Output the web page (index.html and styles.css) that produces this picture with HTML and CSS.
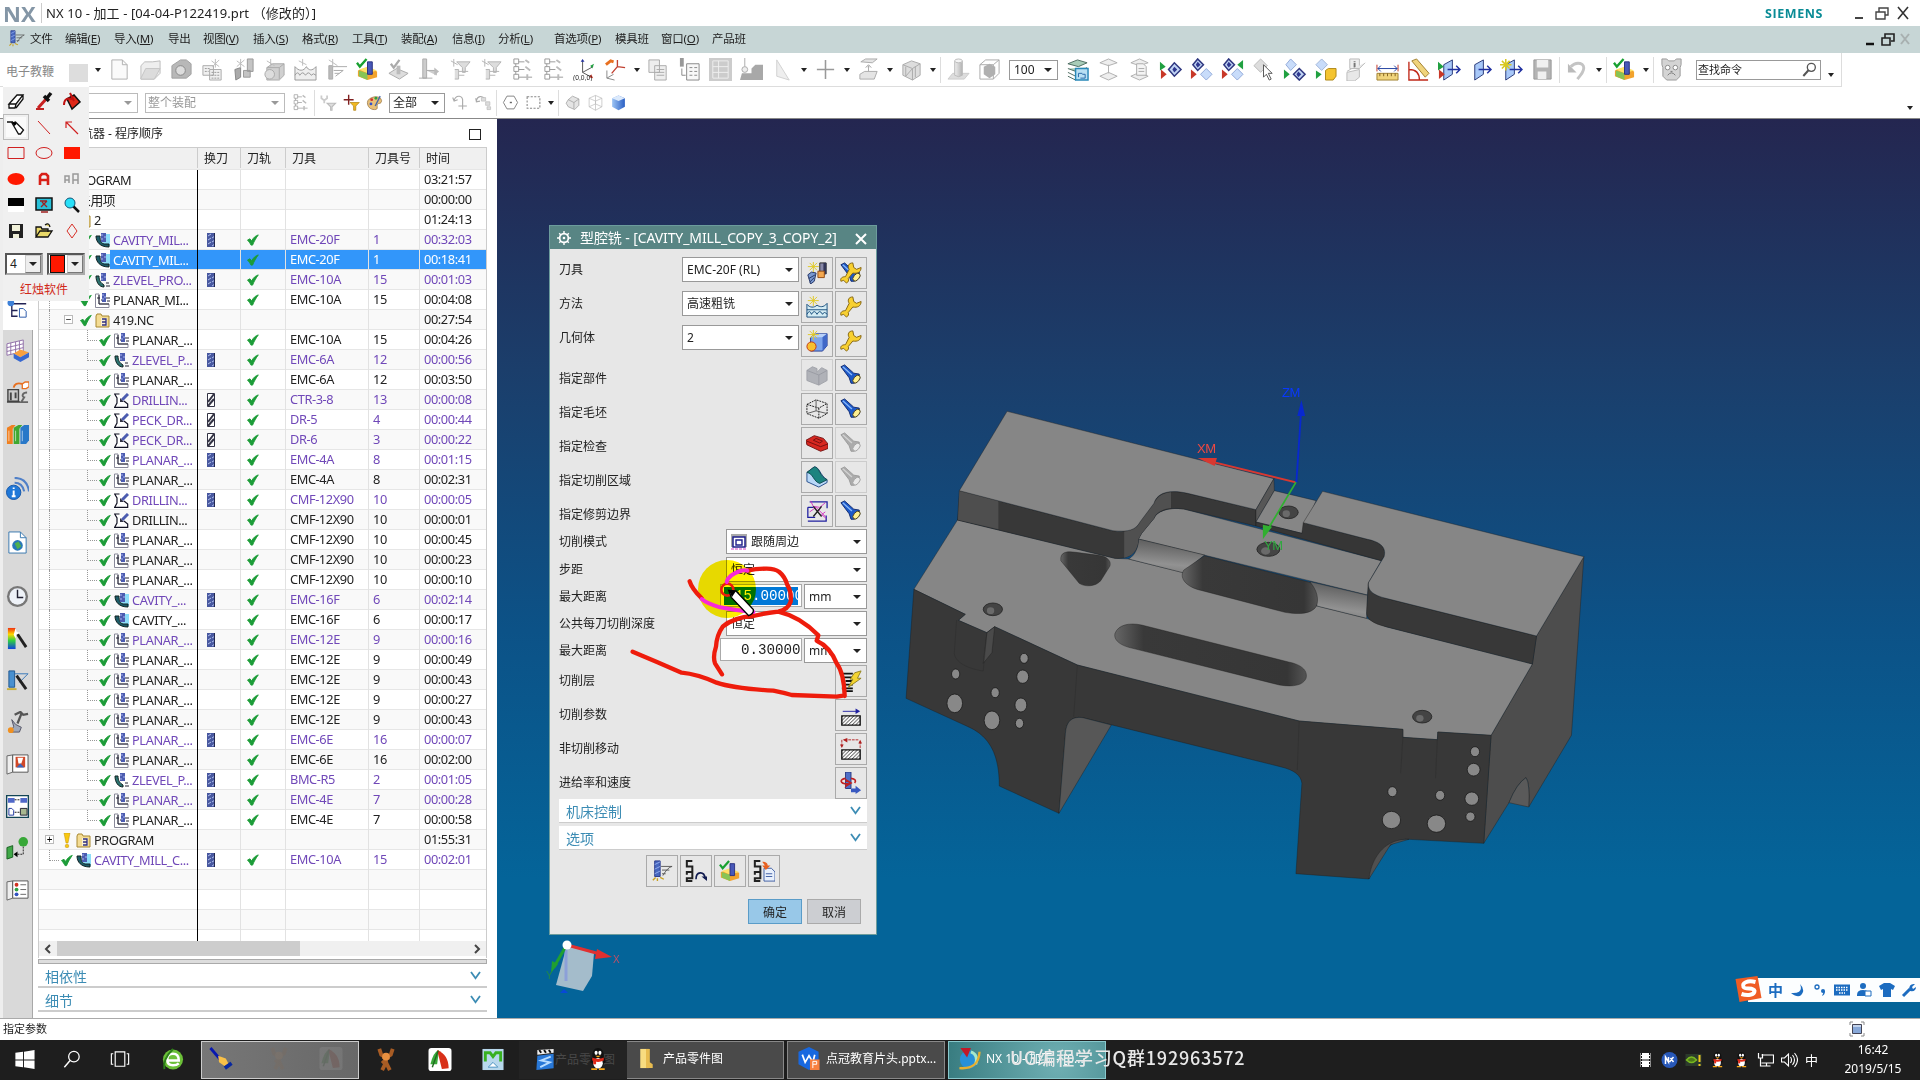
FILE: index.html
```html
<!DOCTYPE html>
<html lang="zh-CN">
<head>
  <meta charset="UTF-8" />
  <title>NX 10 - 加工</title>
  <link rel="stylesheet" href="styles.css">
</head>
<body>

<!-- Icons -->
<svg class="defs" width="0" height="0">
  <defs>
    <linearGradient id="gGray" x1="0" x2="1"><stop offset="0" stop-color="#eee"/><stop offset="1" stop-color="#b4b4b4"/></linearGradient>
    <linearGradient id="gBlue" x1="0" x2="1"><stop offset="0" stop-color="#9cc4f4"/><stop offset="1" stop-color="#2a5fc4"/></linearGradient>
    <linearGradient id="gGroove" x1="0.4" y1="0" x2="0.2" y2="1"><stop offset="0" stop-color="#5a5a5a"/><stop offset="0.7" stop-color="#929292"/><stop offset="1" stop-color="#7c7c7c"/></linearGradient>
    <linearGradient id="gSlot" x1="0" x2="1"><stop offset="0" stop-color="#666"/><stop offset="0.15" stop-color="#393939"/><stop offset="0.9" stop-color="#363636"/><stop offset="1" stop-color="#555"/></linearGradient>
    <linearGradient id="gRain" x1="0" y1="0" x2="0" y2="1"><stop offset="0" stop-color="#f03010"/><stop offset=".3" stop-color="#ffd800"/><stop offset=".6" stop-color="#30d040"/><stop offset="1" stop-color="#1040e0"/></linearGradient>
    <pattern id="hatch" width="4" height="4" patternUnits="userSpaceOnUse"><path d="M0 4L4 0" stroke="#222"/></pattern>
  </defs>

  <symbol id="doc" viewBox="0 0 24 24"><path d="M4 2h11l5 5v15H4z" fill="#fafafa" stroke="#b0b0b0"/><path d="M15 2v5h5" fill="none" stroke="#b0b0b0"/></symbol>
  <symbol id="open" viewBox="0 0 24 24"><path d="M2 8l4-4h8l8-1v13l-6 6H2z" fill="#eee" stroke="#bbb"/><path d="M2 21l5-10h15l-6 11H2z" fill="#dcdcdc" stroke="#c4c4c4"/></symbol>
  <symbol id="camera" viewBox="0 0 24 24"><path d="M2 8l6-4 3-2h6l5 4v11l-5 4H2z" fill="#b8b8b8" stroke="#a0a0a0"/><circle cx="11" cy="13" r="5" fill="#ddd" stroke="#888"/></symbol>
  <symbol id="newprog" viewBox="0 0 24 24"><path d="M2 8h11v10H2zM9 12h12v11H9z" fill="#f0f0f0" stroke="#aaa"/><path d="M11 15h8M11 18h8M11 21h8M4 11h6M4 14h4" stroke="#999" stroke-dasharray="2 1"/><path d="M15 1v9M11 3l8 6M19 2l-7 7" stroke="#bbb"/></symbol>
  <symbol id="newtool" viewBox="0 0 24 24"><path d="M3 12l6-2v10l-5 3z" fill="#aaa" stroke="#888"/><path d="M16 1h6v13h-6zM12 13h7v7h-7z" fill="#c4c4c4" stroke="#999"/><path d="M9 1v9M5 3l8 6M13 2L5 9" stroke="#bbb"/></symbol>
  <symbol id="newgeom" viewBox="0 0 24 24"><path d="M4 10l6-4h12v12l-5 5H4z" fill="#d0d0d0" stroke="#aaa"/><path d="M17 10v12M4 10h13l5-4" stroke="#aaa" fill="none"/><circle cx="7" cy="17" r="5" fill="#ddd" stroke="#aaa"/><path d="M8 1v8M4 3l8 5" stroke="#bbb"/></symbol>
  <symbol id="newmeth" viewBox="0 0 24 24"><path d="M1 9v14h22V9c-4 5-8 4-10 0-3 5-8 5-12 0z" fill="#eee" stroke="#999"/><path d="M1 18q3-5 5 0 3-5 6 0 3-5 6 0 2-3 5 0" fill="none" stroke="#999"/><path d="M9 1v7M5 3l8 4" stroke="#bbb"/></symbol>
  <symbol id="newop" viewBox="0 0 24 24"><path d="M4 8h4v14H4z" fill="#bbb" stroke="#aaa"/><path d="M8 9h15M9 13h10l-8 6M10 16h5" stroke="#aaa" fill="none"/><path d="M8 1v8M4 2l9 6" stroke="#bbb"/></symbol>
  <symbol id="verify" viewBox="0 0 24 24"><path d="M2 13l9-3 11 4v6l-10 3-10-4z" fill="#f2a32c"/><path d="M3 12l9-3 10 4-10 3z" fill="#ffe168"/><path d="M3 19l9 4V16l-9-3z" fill="#88c455"/><path d="M12 4h5v13h-5z" fill="#4858b8" stroke="#283080"/><path d="M1 5l3 4 7-8" stroke="#18a030" stroke-width="2.4" fill="none"/></symbol>
  <symbol id="vgray" viewBox="0 0 24 24"><path d="M4 6l3 4 6-8" stroke="#aaa" stroke-width="2.4" fill="none"/><path d="M2 16l8-5 12 5-9 6z" fill="#ddd" stroke="#aaa"/><path d="M10 8h4v9h-4z" fill="#bbb"/></symbol>
  <symbol id="toolpath" viewBox="0 0 24 24"><path d="M5 1h4v20H5zM1 21h14M9 13h10v5" fill="#ccc" stroke="#aaa"/><path d="M17 10l5 4-5 4" fill="#bbb"/></symbol>
  <symbol id="filt" viewBox="0 0 24 24"><path d="M8 4h14l-5 6v5h-3v-5zM6 12h4v10H6M10 14h10M10 18h6M5 1v8M2 3l7 4" fill="#ddd" stroke="#b4b4b4"/></symbol>
  <symbol id="tree" viewBox="0 0 24 24"><path d="M3 1h5v5H3zM3 9h5v5H3zM3 17h5v5H3zM8 4h6M8 12h6M8 20h14M5 6v3M5 14v3" fill="none" stroke="#999"/><path d="M15 2l4 3M15 9l5 4M17 17v6" stroke="#bbb" stroke-width="2"/></symbol>
  <symbol id="csys" viewBox="0 0 24 24"><path d="M10 15V2M10 15l11-6M10 15l9 5" stroke="#555" fill="none"/><path d="M8 4l2-3 2 3z" fill="#2030a0"/><path d="M18 8l4-2-2 5z" fill="#20a040"/><path d="M17 20l4 1-2-4z" fill="#d03020"/><text x="0" y="23" font-size="7" font-family="Liberation Sans" fill="#222">(0,0,0)</text></symbol>
  <symbol id="csys2" viewBox="0 0 24 24"><path d="M14 9V2M14 9l8 1M14 9l-6 7" stroke="#c04030" fill="none" stroke-width="1.4"/><path d="M2 7l5-4 3 1" stroke="#e87020" stroke-width="3" fill="none"/><path d="M3 21V13M3 21l7-4M3 21l8 2" stroke="#888" fill="none"/></symbol>
  <symbol id="list" viewBox="0 0 24 24"><path d="M9 6h13v17H9z" fill="#f8f8f8" stroke="#888"/><path d="M2 0h4v9H2z" fill="#999"/><path d="M12 10h3M12 14h3M12 18h3M17 10h3M17 14h3M17 18h3M4 11v7h4" fill="none" stroke="#888"/></symbol>
  <symbol id="copy" viewBox="0 0 24 24"><path d="M2 2h11v13H2zM8 8h12v15H8z" fill="#eee" stroke="#aaa"/><path d="M10 12h8M10 15h8M10 18h8" stroke="#aaa"/></symbol>
  <symbol id="grid" viewBox="0 0 24 24"><path d="M0 0h24v24H0z" fill="#ccc"/><path d="M4 3h16v18H4zM4 9h16M10 3v18M4 15h16" fill="none" stroke="#eee"/></symbol>
  <symbol id="stair" viewBox="0 0 24 24"><path d="M0 23h24V7h-8l-4 4v5H2z" fill="#a8a8a8"/><path d="M5 0v9" stroke="#aaa"/><circle cx="5" cy="12" r="3" fill="#eee" stroke="#aaa"/></symbol>
  <symbol id="tri" viewBox="0 0 24 24"><path d="M6 2v17l13 4z" fill="#eee" stroke="#d0d0d0"/></symbol>
  <symbol id="plus" viewBox="0 0 24 24"><path d="M12 2v20M3 12h18" stroke="#999" stroke-width="1.6"/></symbol>
  <symbol id="extr" viewBox="0 0 24 24"><path d="M3 17l5-3h13l-3 8H3zM4 4l5-3h12l-5 4zM12 14V8M9 10l3-3 3 3" fill="#e4e4e4" stroke="#aaa"/></symbol>
  <symbol id="cubeg" viewBox="0 0 24 24"><path d="M3 7l9-4 9 3v12l-8 5-10-5z" fill="#ddd" stroke="#aaa"/><path d="M3 7l10 4 8-5M13 11v12M6 9v10l7-8M16 9v11" fill="none" stroke="#aaa"/></symbol>
  <symbol id="cubew" viewBox="0 0 24 24"><path d="M2 7l6-5h14v14l-6 6H2zM2 7h14v15M16 7l6-5" fill="none" stroke="#aaa"/><path d="M6 9l6-3 6 3v8l-6 4-6-4z" fill="#b0b0b0"/></symbol>
  <symbol id="cyl" viewBox="0 0 24 24"><path d="M1 22l5-6h17l-5 6z" fill="#ddd" stroke="#ccc"/><path d="M8 3v15q4 3 8 0V3" fill="url(#gGray)" stroke="#bbb"/><ellipse cx="12" cy="3" rx="4" ry="2" fill="#f4f4f4" stroke="#bbb"/></symbol>
  <symbol id="layers" viewBox="0 0 24 24"><path d="M2 6l10-4 10 3-9 4zM2 11l11 4 9-5M2 15l8 4M2 19l8 4" fill="#a8ccb8" stroke="#4c6c60"/><path d="M10 11h13v12H10z" fill="#b8e0f4" stroke="#2888b8" stroke-width="1.5"/><path d="M13 20v-4h4M17 17h3v4h-5" fill="none" stroke="#2868a8"/></symbol>
  <symbol id="laym" viewBox="0 0 24 24"><path d="M3 5l9-4 9 4-9 3zM3 19l9-4 9 4-9 4zM12 7v9" fill="#eee" stroke="#b0b0b0"/></symbol>
  <symbol id="laydoc" viewBox="0 0 24 24"><path d="M3 5l9-4 9 4-9 3zM3 19l9-4 9 4-9 4z" fill="#eee" stroke="#b0b0b0"/><path d="M9 6h7l3 3v9H9z" fill="#f4f4f4" stroke="#aaa"/><path d="M11 11h6M11 14h6" stroke="#aaa"/></symbol>
  <symbol id="dia" viewBox="0 0 24 24"><path d="M10 12l6-7 7 7-7 7z" fill="#c0d4f4" stroke="#303880" stroke-width="1.6"/><path d="M14 12l2-3 3 3-3 3z" fill="#303890"/><path d="M1 4l6 5-6 4z" fill="#20a040"/><path d="M2 12l6 5-6 5z" fill="#c83828"/></symbol>
  <symbol id="dia2" viewBox="0 0 24 24"><path d="M3 7l5-6 6 6-6 6z" fill="#c0d4f4" stroke="#303880" stroke-width="1.6"/><path d="M6 7l2-3 3 3-3 3z" fill="#303890"/><path d="M11 17l6-6 6 6-6 6z" fill="#c8dcfa" stroke="#90a8d8"/><path d="M1 12l6 5-6 5z" fill="#c83828"/></symbol>
  <symbol id="dia4" viewBox="0 0 24 24"><use href="#dia2"/><path d="M23 2l-6 5 6 5z" fill="#20a040"/></symbol>
  <symbol id="dia3" viewBox="0 0 24 24"><path d="M3 7l5-6 6 6-6 6z" fill="#c8dcfa" stroke="#90a8d8"/><path d="M11 17l6-6 6 6-6 6z" fill="#c0d4f4" stroke="#303880" stroke-width="1.6"/><path d="M14 17l2-3 3 3-3 3z" fill="#303890"/><path d="M1 12l6 5-6 5z" fill="#20a040"/></symbol>
  <symbol id="diac" viewBox="0 0 24 24"><path d="M2 8l7-7 7 7-7 7z" fill="#ddd" stroke="#bbb"/><path d="M12 7v13l3-3 3 6 2-1-3-6h4z" fill="#fff" stroke="#555"/></symbol>
  <symbol id="diab" viewBox="0 0 24 24"><path d="M2 7l6-6 6 6-6 6z" fill="#c8dcfa" stroke="#a0b4d8"/><path d="M12 13l3-2h8v8l-3 4h-8z" fill="#f4c430" stroke="#b08818"/><path d="M2 13l6 4-6 5z" fill="#20a040"/></symbol>
  <symbol id="info" viewBox="0 0 24 24"><path d="M5 1h10v10H5z" fill="#eee" stroke="#bbb"/><path d="M10 3v1M10 5v5" stroke="#777" stroke-width="2"/><path d="M2 14l5-3h8l6-6M15 12v8l-5 4H2v-9z" fill="#e8e8e8" stroke="#bbb"/></symbol>
  <symbol id="ruler" viewBox="0 0 24 24"><path d="M1 16h22v7H1z" fill="#f0d47c" stroke="#a08030"/><path d="M4 16v3M8 16v3M12 16v3M16 16v3M20 16v3" stroke="#806020"/><path d="M1 7v7M23 7v7" stroke="#c03020"/><path d="M2 11h20M5 8l-3 3 3 3M19 8l3 3-3 3" stroke="#2040a0" fill="none"/></symbol>
  <symbol id="angle" viewBox="0 0 24 24"><path d="M2 4v19h20M2 12q11 0 11 11" fill="none" stroke="#c02818" stroke-width="1.4"/><path d="M5 3l5-2 13 15-4 4z" fill="#f0d47c" stroke="#a08030"/></symbol>
  <symbol id="sect" viewBox="0 0 24 24"><path d="M6 7l9-5v15l-9 6z" fill="#a8c8f8" stroke="#283878"/><path d="M10 12h13M19 8l4 4-4 4" fill="none" stroke="#2030a0" stroke-width="1.5"/></symbol>
  <symbol id="sectrg" viewBox="0 0 24 24"><use href="#sect"/><path d="M0 4l6 5-6 4z" fill="#20a040"/><path d="M1 12l6 5-6 5z" fill="#c83828"/></symbol>
  <symbol id="sectnew" viewBox="0 0 24 24"><use href="#sect"/><path d="M6 1v12M0 7h12M2 3l8 8M10 3l-8 8" stroke="#d8c820" stroke-width="1.6"/></symbol>
  <symbol id="save" viewBox="0 0 24 24"><path d="M3 2h18v20H3z" fill="#b4b4b4" stroke="#999"/><path d="M6 2h12v8H6zM7 14h9v8H7z" fill="#f0f0f0"/></symbol>
  <symbol id="undo" viewBox="0 0 24 24"><path d="M5 9c6-6 16-4 13 4-1 4-4 6-6 9" fill="none" stroke="#c4c4c4" stroke-width="3"/><path d="M2 6v9h9z" fill="#bbb"/></symbol>
  <symbol id="bear" viewBox="0 0 24 24"><path d="M2 1h5l2 2h6l2-2h5v6l-1 3v9l-4 4H7l-4-4v-9L2 7z" fill="#d4d4d4" stroke="#999"/><circle cx="8" cy="10" r="2.4" fill="#fff" stroke="#888"/><circle cx="16" cy="10" r="2.4" fill="#fff" stroke="#888"/><path d="M8 18q4-5 8 0M11 14h2" fill="none" stroke="#777"/></symbol>
  <symbol id="mag" viewBox="0 0 24 24"><circle cx="14" cy="8" r="6" fill="none" stroke="#555" stroke-width="2"/><path d="M10 12l-8 9" stroke="#555" stroke-width="3"/></symbol>
  <symbol id="mill" viewBox="0 0 24 24"><path d="M4 1h6v17H4z" fill="#4868c0" stroke="#283888"/><path d="M4 5l6-3M4 10l6-3M4 15l6-3" stroke="#98b0f0"/><path d="M2 22l3-3M7 20v3M10 19l4 2" stroke="#c8a020" stroke-width="1.5"/><path d="M11 7h12q-5 1-10 10M12 11h8M12 15h4" stroke="#555" fill="none"/></symbol>
  <symbol id="eye" viewBox="0 0 24 24"><path d="M6 8l6-5 9 4v9l-6 6-9-4-3-5z" fill="#e4e4e4" stroke="#999"/><path d="M6 8l8 4 7-5M14 12v9" fill="none" stroke="#999"/></symbol>
  <symbol id="shade" viewBox="0 0 24 24"><path d="M3 6l9-4 9 4v12l-9 5-9-5z" fill="url(#gBlue)"/><path d="M3 6l9 4 9-4-9-4z" fill="#dceafc"/></symbol>
  <symbol id="wire" viewBox="0 0 24 24"><path d="M3 6l9-4 9 4v12l-9 5-9-5zM3 6l9 4 9-4M12 10v13M12 2v12l-9 4M12 14l9 4" fill="none" stroke="#bbb"/></symbol>
  <symbol id="hexa" viewBox="0 0 24 24"><path d="M7 3h10l5 9-5 9H7l-5-9z" fill="none" stroke="#888" stroke-width="1.4"/><path d="M11 12h3" stroke="#666" stroke-width="2"/></symbol>
  <symbol id="marq" viewBox="0 0 24 24"><path d="M3 4h18v16H3z" fill="none" stroke="#888" stroke-width="1.5" stroke-dasharray="3 2"/></symbol>
  <symbol id="pal" viewBox="0 0 24 24"><path d="M2 12C2 4 20 0 22 9c0 6-5 3-6 6s2 7-4 7C6 22 2 18 2 12z" fill="#e8c078" stroke="#907040"/><circle cx="8" cy="8" r="2" fill="#d03030"/><circle cx="14" cy="6" r="2" fill="#30a040"/><circle cx="7" cy="14" r="2" fill="#3050d0"/><path d="M20 3l-7 14" stroke="#4868a8" stroke-width="2"/></symbol>
  <symbol id="selc" viewBox="0 0 24 24"><path d="M8 1v14M1 8h14" stroke="#802020" stroke-width="2"/><path d="M10 12h13l-5 5v6h-3v-6z" fill="#f0b820" stroke="#b08010"/></symbol>
  <symbol id="selg" viewBox="0 0 24 24"><path d="M2 2v4l4 3 4-3V2M6 9v4" fill="none" stroke="#ccc" stroke-width="2.500"/><path d="M10 13h12l-5 5v5h-2v-5z" fill="#ddd" stroke="#bbb" stroke-width="1.5"/></symbol>
  <symbol id="turn" viewBox="0 0 24 24"><path d="M3 9c3-9 13-7 12 2v11M9 17h12M1 5l2 5 5-2" stroke="#aaa" stroke-width="1.6" fill="none"/></symbol>
  <symbol id="turn2" viewBox="0 0 24 24"><path d="M2 10c1-8 9-8 11-3M1 6l1 5 5-1" stroke="#aaa" stroke-width="1.600" fill="none"/><path d="M9 5h6v5H9zM15 11h6v5h-6zM17 18h5v4h-5z" fill="#ddd" stroke="#bbb"/></symbol>

  <symbol id="ok" viewBox="0 0 12 12"><path d="M.500 6l2.500-1.200 1.600 2.200C6 4 8.600 1.600 11.300.900 9 4 7 7.500 5.600 11.100H4C3 9 1.500 7.200.500 6z" fill="#1c9c38" stroke="#1c9c38" stroke-width=".9"/></symbol>
  <symbol id="planar" viewBox="0 0 15 15"><path d="M.5 1v13.500H14V11H4V1z" fill="#fff" stroke="#889"/><path d="M4 2v9h10M2 5h3M6 7h3M11 5h4M12 8h3" stroke="#223" fill="none"/><path d="M7 0h4v9H7z" fill="#4c5cb0"/><path d="M7 2h2M9 4h2M7 6h2" stroke="#a8b4f0"/></symbol>
  <symbol id="zlevel" viewBox="0 0 15 15"><path d="M1 3h3c0 5 2 7 5 9v2C4 14 1 9 1 3z" fill="#2c7470" stroke="#122"/><path d="M6 0h5v8H6z" fill="#4c5cb0"/><path d="M6 2h2M9 4h2M6 6h2" stroke="#a8b4f0"/><path d="M11 10h3M11 13h4" stroke="#223"/></symbol>
  <symbol id="cavity" viewBox="0 0 15 15"><path d="M8 1h7v12H7z" fill="#8cdcf8"/><path d="M1 3h4c0 5 1 7 4 8h5v3C5 14 1 9 1 3z" fill="#1c5c68" stroke="#122"/><path d="M6 0h5v9H6z" fill="#4c5cb0"/><path d="M6 2h2M9 4h2M6 6h2" stroke="#a8b4f0"/></symbol>
  <symbol id="drill" viewBox="0 0 15 15"><path d="M5.500 1H.700L3 5v5l-2.300 4.300h13V11L10 8" fill="#fff" stroke="#112" stroke-width="1.200"/><path d="M14 1L8 7" stroke="#4c5cb0" stroke-width="3"/><path d="M6 5v4h4z" fill="#334"/></symbol>
  <symbol id="folder" viewBox="0 0 15 15"><path d="M1 3l1-2h4l1 2h7v11H1z" fill="#f4dc94" stroke="#a88830"/><path d="M6 5h6v8H6z" fill="#fff" opacity=".6"/><path d="M7 6h4v6H7M7 9h4" stroke="#303080" fill="none" stroke-width="1.300"/></symbol>
  <symbol id="warn" viewBox="0 0 12 15"><path d="M3 0h6L7 10H5z" fill="#f8c810" stroke="#c09010" stroke-width=".5"/><circle cx="6" cy="13" r="1.800" fill="#f8c810" stroke="#c09010" stroke-width=".5"/></symbol>
  <symbol id="swapm" viewBox="0 0 8 14"><path d="M0 0h8v14H0z" fill="#4858a0"/><path d="M1 3l3-2M1 7l3-2M1 11l3-2M5 5l3-2M5 9l3-2M5 13l3-2" stroke="#b0c0ec"/><path d="M7.500 0v14" stroke="#222850"/></symbol>
  <symbol id="swapd" viewBox="0 0 8 14"><path d="M.500.500h7v13h-7z" fill="#fff" stroke="#334"/><path d="M1 9L7 1M1 13L7 6" stroke="#334" stroke-width="2"/></symbol>

  <symbol id="torch" viewBox="0 0 24 24"><path d="M1 3l4-2 10 9 6 1v5l-5 5h-4l-2-6z" fill="#1c58c8" stroke="#10286c"/><path d="M3 3l10 9" stroke="#88b8f8" stroke-width="1.5"/><ellipse cx="18" cy="16.500" rx="3" ry="5" transform="rotate(40 18 16.500)" fill="#fff090" stroke="#443c20"/></symbol>
  <symbol id="wrench" viewBox="0 0 24 24"><path d="M14 1c-5 0-6 4-4 7l-4 8c-4 0-6 2-5 5l3-1 3 3c2-1 3-3 2-5l5-6c5 1 9-1 9-6l-5 2-3-2z" fill="#f8d030" stroke="#80600c"/></symbol>
  <symbol id="dtool" viewBox="0 0 24 24"><path d="M2 14l4-3 5 1-2 9-4 3z" fill="#7898d0" stroke="#203060"/><path d="M3 18l7-4M4 22l5-5" stroke="#203060"/><path d="M15 1h7v12h-7z" fill="#8888a8" stroke="#222"/><path d="M19 1h3v12h-3z" fill="#333658"/><path d="M13 10h7v7h-7z" fill="#f4a850" stroke="#904810"/><path d="M8 0v11M2 5h12M4 1l8 8M12 1L4 9" stroke="#e0c820"/></symbol>
  <symbol id="dmeth" viewBox="0 0 24 24"><path d="M1 9v14h22V8c-4 5-8 4-11 2-3 3-8 3-11-1zM1 15h22" fill="#d4ecf4" stroke="#104878"/><path d="M1 20q3-6 5 0 3-6 6 0 3-6 6 0 2-4 5 0" fill="none" stroke="#104878"/><path d="M8 0v11M2 5h12M4 1l8 8M12 1L4 9" stroke="#e0c820"/></symbol>
  <symbol id="dgeom" viewBox="0 0 24 24"><path d="M5 8l6-4h12v13l-5 6H5z" fill="#7ca4ec" stroke="#203890"/><path d="M5 8l6-4h12l-5 4z" fill="#b8d0f8"/><path d="M18 8l5-4v13l-5 6z" fill="#4068c8"/><circle cx="6" cy="18" r="5" fill="#f8c030" stroke="#c03010"/><path d="M8 0v11M2 5h12M4 1l8 8M12 1L4 9" stroke="#e0c820"/></symbol>
  <symbol id="dpart" viewBox="0 0 24 24"><path d="M1 7l6-4 5 2v4l5-5 6 3v11l-9 5-13-5z" fill="#b0b2b8" stroke="#a0a2a8"/><path d="M1 7l13 5 9-5M14 12v11" fill="none" stroke="#989aa2"/></symbol>
  <symbol id="dblank" viewBox="0 0 24 24"><path d="M1 7l10-5 12 4v11l-9 5-13-5zM1 7l13 4 9-5M14 11v11" fill="none" stroke="#111" stroke-dasharray="2 1"/><path d="M11 2v12l-10 3M11 14l12 3" fill="none" stroke="#555"/></symbol>
  <symbol id="dcheck" viewBox="0 0 24 24"><path d="M0 9l9-5 10 3 5 6v5l-8 3L1 14z" fill="#d82820" stroke="#701010"/><path d="M1 10l15 6 8-3M8 9l3-2 7 3-3 2z" fill="none" stroke="#701010"/></symbol>
  <symbol id="darea" viewBox="0 0 24 24"><path d="M1 7L9 1c6 0 6 9 14 14v3l-9 5L1 17z" fill="#b8d8f8" stroke="#204888"/><path d="M1 7l8-6c6 0 5 10 14 14l-8 4C8 17 8 8 1 7z" fill="#1c8480" stroke="#104c50"/></symbol>
  <symbol id="dtrim" viewBox="0 0 24 24"><path d="M4 2h19v7M2 8v11h8M2 23h20v-6M2 8h6" fill="none" stroke="#2020a0" stroke-width="1.4"/><path d="M5 1l3 6 7 1 6-5M21 13l-4 3 5 4M4 13l7-5 10 10" fill="none" stroke="#d030c0"/><path d="M8 7l9 11M17 7L8 18" stroke="#222" stroke-width="1.5"/></symbol>
  <symbol id="dlayer" viewBox="0 0 24 24"><path d="M2 4h12M4 8h10M6 12h8M4 16h10M2 20h12M4 23h10" stroke="#111" stroke-width="2"/><path d="M16 3l7-2-4 8h4L9 19l5-9h-3z" fill="#f4d430" stroke="#908020"/></symbol>
  <symbol id="dcut" viewBox="0 0 24 24"><path d="M2 13h20v10H2z" fill="#fff"/><path d="M2 13h20v10H2z" fill="url(#hatch)" stroke="#111" stroke-width="1.5"/><path d="M3 8h16" stroke="#2020a0"/><path d="M17 5l5 3-5 3z" fill="#2020a0"/></symbol>
  <symbol id="dnon" viewBox="0 0 24 24"><path d="M2 13h20v10H2z" fill="#fff"/><path d="M2 13h20v10H2z" fill="url(#hatch)" stroke="#111" stroke-width="1.5"/><path d="M5 2h15M2 2v8M22 4v8" stroke="#b02020" stroke-dasharray="3 1"/><path d="M0 7h4l-2 4zM20 6h4l-2-4zM8 0v5L3 2z" fill="#b02020"/></symbol>
  <symbol id="dfeed" viewBox="0 0 24 24"><path d="M6 0h6v18H6z" fill="#5070c8" stroke="#283880"/><path d="M6 7C-1 8 0 13 8 13l-1 2 5-3-5-3v2M12 7q7 1 4 5" fill="none" stroke="#c02020" stroke-width="1.800"/><path d="M12 22v-4h5v-3l6 5-6 4v-2z" fill="#3858c0"/></symbol>
  <symbol id="dplay" viewBox="0 0 24 24"><path d="M8 1H2v6h6v6H2v3M8 9v11H2v3h6" fill="none" stroke="#222" stroke-width="2.200"/><path d="M12 21c0-9 9-9 10-1" fill="none" stroke="#111c50" stroke-width="1.800"/><path d="M18 18h6v5z" fill="#111c50"/></symbol>
  <symbol id="dlist" viewBox="0 0 24 24"><path d="M8 1H2v6h6v6H2v3M8 9v11H2v3h6" fill="none" stroke="#222" stroke-width="2.200"/><path d="M12 9h8l4 4v10H12z" fill="#e8f0fc" stroke="#3858a0"/><path d="M14 15h7M14 18h7" stroke="#3858a0"/><path d="M10 2c5 0 6 2 6 4h3l-5 5-4-5h3" fill="#e86020"/></symbol>
  <symbol id="follow" viewBox="0 0 16 16"><path d="M0 0h16v13H0z" fill="#aaa"/><path d="M2 3h12v10H2z" fill="#fff" stroke="#20208c" stroke-width="1.5"/><path d="M5 6h6v5H5z" fill="none" stroke="#20208c" stroke-width="1.400"/><path d="M0 15h16" stroke="#d040c0" stroke-dasharray="3 1"/></symbol>

  <symbol id="r1" viewBox="0 0 24 24"><path d="M5 2v17h6M5 6h15M5 13h6" fill="none" stroke="#225" stroke-width="1.400"/><circle cx="4" cy="5" r="3.500" fill="#3c80d8"/><path d="M13 11h4l3 3v6h-7z" fill="#fff" stroke="#2858a8"/></symbol>
  <symbol id="r2" viewBox="0 0 24 24"><path d="M1 5l17-4v12L1 17zM1 9l17-4M1 13l17-4M5 4v12M10 3v12M14 2v12" fill="#fff" stroke="#9070a8"/><path d="M8 15l7-4 9 3-9 5z" fill="#f8a040"/><path d="M8 15l7 4 9-5v5l-9 5-7-4z" fill="#3868d0"/></symbol>
  <symbol id="r3" viewBox="0 0 24 24"><path d="M2 9h11v12H2zM1 22h14" fill="#ccc" stroke="#444" stroke-width="1.500"/><path d="M5 12v8M10 12v6" stroke="#444" stroke-width="2"/><path d="M8 7q1-6 9-4" fill="none" stroke="#e87020" stroke-width="2"/><path d="M17 3l3-2h4v5l-3 2h-4z" fill="#fff" stroke="#e87020" stroke-width="1.400"/><path d="M22 12c-5 0-6 4-3 5l-3 5h7" fill="none" stroke="#666" stroke-width="2"/></symbol>
  <symbol id="r4" viewBox="0 0 24 24"><path d="M1 5l5-3h4l-3 4v16H1z" fill="#f08020"/><path d="M8 5l5-3h4l-3 4v16H8z" fill="#40a830"/><path d="M15 5l4-3h5v16l-3 4h-6z" fill="#2878c8"/><path d="M3 8v11M10 8v11M17 8v11" stroke="#fff" opacity=".6"/></symbol>
  <symbol id="r5" viewBox="0 0 24 24"><circle cx="8" cy="16" r="7.500" fill="#2078d8" stroke="#1858a8"/><path d="M8 14v6M6 20h4M8 11v1.500" stroke="#fff" stroke-width="2"/><path d="M9 6q8 0 10 9M9 1q13 0 15 14" fill="none" stroke="#5080c8" stroke-width="2.200"/></symbol>
  <symbol id="r6" viewBox="0 0 24 24"><path d="M3 1h12l6 6v16H3z" fill="#fff" stroke="#3878b0"/><path d="M15 1v6h6" fill="none" stroke="#3878b0"/><circle cx="12" cy="15" r="5.500" fill="#2878b8"/><path d="M9 13l4-2 3 5-4 3z" fill="#50b050"/></symbol>
  <symbol id="r7" viewBox="0 0 24 24"><circle cx="12" cy="12" r="11" fill="#777"/><circle cx="12" cy="12" r="8.500" fill="#eef2f8"/><path d="M12 5v8h6" fill="none" stroke="#223" stroke-width="1.500"/></symbol>
  <symbol id="r8" viewBox="0 0 24 24"><path d="M2 1h8v22H2z" fill="url(#gRain)"/><path d="M11 6l10 15" stroke="#222" stroke-width="3"/><path d="M10 1l1 4 4 1-4 2-1 4-2-4" fill="#fff"/></symbol>
  <symbol id="r9" viewBox="0 0 24 24"><path d="M3 2h6v17H3z" fill="#4890d0" stroke="#205890"/><path d="M9 5h14l-9 9" fill="none" stroke="#3878b8"/><path d="M1 21h10" stroke="#c8b040" stroke-width="2"/><path d="M11 7l10 14" stroke="#222" stroke-width="3"/></symbol>
  <symbol id="r10" viewBox="0 0 24 24"><path d="M9 4l6-3 3 3 5-1M16 3l-4 10" stroke="#555" stroke-width="2.400" fill="none"/><path d="M6 9l4 5 6 3-2 5H5l3-6z" fill="#a0a8b8" stroke="#556"/><circle cx="5" cy="20" r="3" fill="#f09020"/></symbol>
  <symbol id="r11" viewBox="0 0 24 24"><path d="M1 3l6-1v18l-6 2z" fill="#eee" stroke="#666"/><path d="M7 2h16v18H7z" fill="#fff" stroke="#555"/><path d="M10 4h10v11H10z" fill="#d04828"/><path d="M12 5h6l-2 6h-3z" fill="#fff"/><path d="M11 15l4-4 4 4z" fill="#3868c0"/></symbol>
  <symbol id="r12" viewBox="0 0 24 24"><path d="M.700.700h22.600v22.600H.700z" fill="#fff" stroke="#145" stroke-width="1.400"/><path d="M2 3h7v5H2zM15 3h7v5h-7z" fill="#5068c8"/><path d="M9 5h6M9 18h6" stroke="#111" stroke-dasharray="2 1"/><path d="M3 14h3l2 2v5H3z" fill="#fff" stroke="#2038a0"/><path d="M15 14h7v7h-7z" fill="#a8b890" stroke="#223"/></symbol>
  <symbol id="r13" viewBox="0 0 24 24"><path d="M1 11l6-2v12l-6 2z" fill="#40a848" stroke="#186020"/><path d="M18 10v8H9" fill="none" stroke="#222" stroke-dasharray="2 1"/><path d="M8 18l4-3v6z"/><circle cx="18" cy="5" r="5" fill="#38a838"/></symbol>
  <symbol id="r14" viewBox="0 0 24 24"><path d="M1 3l6-1v18l-6 2z" fill="#eee" stroke="#666"/><path d="M7 2h16v18H7z" fill="#fff" stroke="#555"/><circle cx="11" cy="6" r="2" fill="#d03020"/><circle cx="11" cy="11" r="2" fill="#30a040"/><circle cx="11" cy="16" r="2" fill="#3050c0"/><path d="M15 6h6M15 11h6M15 16h6" stroke="#666"/></symbol>

  <symbol id="qq" viewBox="0 0 20 24"><path d="M2 15q0-4 2-6Q4 0 10 0t6 9q2 2 2 6l-2 1-2 5H6l-2-5z" fill="#111"/><ellipse cx="10" cy="16" rx="5" ry="5.500" fill="#fff"/><path d="M4 10q6 3 12 0v3q-6 3-12 0z" fill="#e02818"/><path d="M5 12h3v5H5z" fill="#e02818"/><ellipse cx="8" cy="5" rx="1.600" ry="2.200" fill="#fff"/><ellipse cx="12" cy="5" rx="1.600" ry="2.200" fill="#fff"/><path d="M7 8h6l-3 2zM3 21h6v2H3zM11 21h6v2h-6z" fill="#f8a818"/></symbol>
  <symbol id="puppet" viewBox="0 0 20 24"><path d="M3 1l2 6 5 3 5-3 2-6M10 6v10M10 12l-4 4M10 15l-4 8M10 15l4 8M6 9l8 1" stroke="#a85c24" stroke-width="4" fill="none"/><circle cx="10" cy="9" r="4" fill="#e89040"/></symbol>
  <symbol id="umb" viewBox="0 0 24 24"><rect width="24" height="24" rx="3" fill="#fff"/><path d="M2 17q3-13 9-15l-2 15z" fill="#38a838"/><path d="M9 2q12 5 12 19l-7 1z" fill="#d83018"/><path d="M10 3L4 20" stroke="#206820" stroke-width="1.500"/></symbol>
</svg>

<div class="titlebar">
  <span class="nx-logo">NX</span>
  <span class="title-text">NX 10 - 加工 - [04-04-P122419.prt （修改的）]</span>
  <span class="siemens">SIEMENS</span>
  <svg class="win-btns" viewBox="0 0 60 16"><path d="M2 13h8" stroke="#444" stroke-width="2"/><path d="M23 7h9v7h-9zM26 7V3h9v7h-3" fill="none" stroke="#444" stroke-width="1.400"/><path d="M45 2l10 12M55 2L45 14" stroke="#333" stroke-width="1.600"/></svg>
</div>

<div class="menubar">
  <svg class="menu-ic"><use href="#mill"/></svg>
  <div class="menus">
    <span>文件</span><span>编辑(<u>E</u>)</span><span>导入(<u>M</u>)</span><span>导出</span><span>视图(<u>V</u>)</span><span>插入(<u>S</u>)</span><span>格式(<u>R</u>)</span><span>工具(<u>T</u>)</span><span>装配(<u>A</u>)</span><span>信息(<u>I</u>)</span><span>分析(<u>L</u>)</span><span>首选项(<u>P</u>)</span><span>模具班</span><span>窗口(<u>O</u>)</span><span>产品班</span>
  </div>
  <svg class="mdi-btns" viewBox="0 0 50 16"><path d="M2 13h8" stroke="#111" stroke-width="2.500"/><path d="M18 7h8v7h-8zM21 7V3h9v7h-3" fill="none" stroke="#222" stroke-width="1.600"/><path d="M37 3l8 10M45 3l-8 10" stroke="#a8b0b0" stroke-width="2"/></svg>
</div>

<div class="toolbar main-tools" id="mainTools"></div>

<div class="toolbar sel-tools">
  <span class="combo dim w-hid"></span>
  <span class="combo dim w-asm">整个装配</span>
  <svg class="ic s"><use href="#tree"/></svg>
  <i class="sep"></i>
  <svg class="ic s"><use href="#selg"/></svg><svg class="ic s"><use href="#selc"/></svg><svg class="ic s"><use href="#pal"/></svg>
  <span class="combo w-all">全部</span>
  <svg class="ic s"><use href="#turn"/></svg><svg class="ic s"><use href="#turn2"/></svg>
  <i class="sep"></i>
  <svg class="ic s"><use href="#hexa"/></svg><svg class="ic s"><use href="#marq"/></svg><i class="dd"></i>
  <i class="sep"></i>
  <svg class="ic s"><use href="#eye"/></svg><svg class="ic s"><use href="#wire"/></svg><svg class="ic s"><use href="#shade"/></svg>
  <i class="dd last"></i>
</div>

<div class="work">
  <div class="resbar" id="resbar"></div>

  <div class="navigator">
    <div class="nav-title"><span>工序导航器 - 程序顺序</span><i class="max"></i></div>
    <div class="tree">
      <div class="row head"><span></span><span>换刀</span><span>刀轨</span><span>刀具</span><span>刀具号</span><span>时间</span></div>
      <div class="rows" id="rows"></div>
      <div class="hscroll"><svg viewBox="0 0 8 10"><path d="M6 1L2 5l4 4"/></svg><i></i><svg class="r" viewBox="0 0 8 10"><path d="M2 1l4 4-4 4"/></svg></div>
    </div>
    <div class="split"></div>
    <div class="fold">相依性<svg viewBox="0 0 12 10"><path d="M1 1l5 7 5-7"/></svg></div>
    <div class="fold">细节<svg viewBox="0 0 12 10"><path d="M1 1l5 7 5-7"/></svg></div>
  </div>

  <div class="viewport">
    <!-- Mold part -->
    <svg class="part" viewBox="0 0 1568 1560" preserveAspectRatio="none">
      <g stroke="#1c1c1c" stroke-width="1" stroke-linejoin="round">
        <path fill="#4d4d4d" d="M1511 560L1408 798 1399 882 1309 1096 1293 1420 1348 1298Q1365 1240 1385 1223 1394 1240 1391 1311L1484 1096Z"/>
        <path fill="#5a5a5a" d="M1348 1298Q1365 1240 1385 1223 1394 1240 1391 1311Z"/>
        <path fill="#868686" d="M147 450L490 565 520 567 1038 745 1080 770 1399 882 1309 1096 1193 1086 1192 1109 1117 1102 1117 1078 891 1053 408 885 228 770 211 788 149 751 164 733 52 658Z"/>
        <path fill="#868686" d="M640 417L1070 572 1042 638 1040 675 541 507 548 490 575 445C580 425 605 410 640 417Z"/>
        <path fill="url(#gGroove)" d="M541 507L685 555 638 608 520 567C535 555 541 530 541 507Z"/>
        <path fill="url(#gGroove)" d="M915 635L1040 676 1038 745 930 708Z"/>
        <path fill="#383838" d="M151 362L485 482C520 487 535 480 545 455L575 400C580 375 600 355 648 370L797 419V468L640 417C605 410 580 425 575 445L548 490 541 507C540 545 525 568 490 565L147 450Z"/>
        <path fill="#4e4e4e" stroke="none" d="M151 363L236 393V478L148 449Z"/>
        <path fill="#505050" stroke="none" d="M545 455L575 400C580 385 590 370 612 366V414C590 417 578 430 575 445L548 490 541 507C540 545 525 560 510 563V484C530 480 538 475 545 455Z"/>
        <path fill="#868686" d="M255 124L836 326 797 419 648 370C600 355 580 375 575 400L545 455C535 480 520 487 485 482L151 362Z"/>
        <path fill="#575757" d="M836 326L837 362 797 456V419Z"/>
        <path fill="#868686" d="M837 362L928 392 897 490 797 456Z"/>
        <path fill="#363636" d="M797 456L897 490 900 458 1040 508C1065 515 1082 530 1076 560L1070 572 797 468Z"/>
        <path fill="#383838" d="M1042 638C1040 660 1050 675 1080 685L1408 798 1399 882 1080 770C1050 760 1036 745 1038 725Z"/>
        <path fill="#868686" d="M942 364L1511 560 1408 798 1080 685C1050 675 1040 660 1042 638L1076 560C1082 530 1065 515 1040 508L900 458Z"/>
        <path fill="url(#gSlot)" d="M685 557L915 637C930 660 935 690 928 710 918 730 895 735 860 727L680 662C640 650 630 620 640 600Z"/>
        <path fill="url(#gSlot)" d="M372 572C370 545 385 543 405 547L455 556C475 560 482 575 479 588L460 630C450 650 425 652 412 640Z"/>
        <path fill="url(#gSlot)" d="M548 765L868 876C900 885 910 905 906 925 900 945 880 952 848 945L520 832C495 822 487 805 490 790 497 765 520 757 548 765Z"/>
        <path fill="#383838" d="M52 658L164 733 149 751 211 788 228 770 408 885 891 1053 1117 1078 1117 1102 1192 1109 1193 1086 1309 1096 1293 1420 1130 1408C1085 1405 1060 1470 1043 1527L884 1511 897 1240C895 1215 880 1200 850 1190L420 1043C395 1038 384 1055 382 1090L368 1330 238 1248C238 1160 220 1100 170 1070L35 985Z"/>
        <path fill="#575757" d="M382 1090C384 1055 395 1038 420 1043L482 1065 368 1330Z"/>
        <path fill="#505050" d="M1130 1408C1085 1405 1050 1450 1043 1527L1090 1424Z"/>
        <path fill="#4a4a4a" d="M211 788L228 770 222 848 203 880Z"/>
        <path fill="none" stroke="#2a2a2a" d="M145 750L140 850C142 875 165 895 203 903L211 788M408 885L400 1040M891 1053L887 1200M1117 1102L1112 1210M1192 1109L1188 1225"/>
      </g>
      <g fill="#444" stroke="#222" stroke-width="2">
        <ellipse cx="224" cy="718" rx="21" ry="19"/><ellipse cx="824" cy="538" rx="25" ry="21"/><ellipse cx="868" cy="427" rx="21" ry="19"/><ellipse cx="1159" cy="1040" rx="21" ry="19"/>
      </g>
      <g fill="#6a6a6a">
        <ellipse cx="219" cy="722" rx="8" ry="10"/><ellipse cx="818" cy="543" rx="10" ry="11"/><ellipse cx="863" cy="431" rx="8" ry="10"/><ellipse cx="1154" cy="1045" rx="8" ry="10"/>
      </g>
      <g fill="#888" stroke="#1a1a1a" stroke-width="2">
        <ellipse cx="292" cy="865" rx="9" ry="15"/><ellipse cx="143" cy="912" rx="9" ry="15"/><ellipse cx="289" cy="920" rx="13" ry="20"/><ellipse cx="229" cy="968" rx="9" ry="15"/><ellipse cx="141" cy="1000" rx="17" ry="28"/><ellipse cx="285" cy="1005" rx="13" ry="21"/><ellipse cx="222" cy="1051" rx="17" ry="28"/><ellipse cx="282" cy="1060" rx="9" ry="15"/>
        <ellipse cx="1274" cy="1145" rx="10" ry="15"/><ellipse cx="1271" cy="1199" rx="14" ry="19"/><ellipse cx="1094" cy="1265" rx="10" ry="15"/><ellipse cx="1198" cy="1276" rx="10" ry="15"/><ellipse cx="1267" cy="1286" rx="15" ry="20"/><ellipse cx="1264" cy="1340" rx="10" ry="14"/><ellipse cx="1092" cy="1350" rx="20" ry="26"/><ellipse cx="1190" cy="1361" rx="20" ry="26"/>
      </g>
      <path d="M884 337L700 275" stroke="#d83830" stroke-width="6"/><path d="M670 264l42 0-5 24z" fill="#d83830"/>
      <path d="M885 337L895 130" stroke="#0828d0" stroke-width="4"/><path d="M896 90l8 48h-17z" fill="#0828d0"/>
      <path d="M884 337L822 480" stroke="#30b030" stroke-width="4"/><path d="M812 508l0-44 20 6z" fill="#30b030"/>
    </svg>
    <span class="axis zm">ZM</span><span class="axis xm">XM</span><span class="axis ym">YM</span>

    <svg class="triad" viewBox="0 0 90 80"><path d="M27 20l27 8-2 23-9 15-27-6z" fill="#a4bccb"/><path d="M26 22v34" stroke="#8ca0d8" stroke-width="3"/><path d="M20 68l4-4 4 4z" fill="#0848d8"/><path d="M27 20L60 29" stroke="#e03030" stroke-width="3"/><path d="M57 24l15 8-17 2z" fill="#e03030"/><path d="M26 21L14 42" stroke="#20a030" stroke-width="3"/><path d="M12 36l6 3-7 9z" fill="#20a030"/><circle cx="27" cy="20" r="4.500" fill="#fff"/><text x="73" y="38" font-size="10" fill="#c05068">X</text><text x="6" y="54" font-size="10" fill="#208848">Y</text></svg>

    <div class="ime">
      <svg class="sogou" viewBox="0 0 28 28"><path d="M1 4L23 1l4 22-22 4z" fill="#f05c24"/><path d="M21 7C13 5 7 8 9 12c2 3 10 0 11 4 0 4-7 5-13 3" fill="none" stroke="#fff" stroke-width="4"/></svg>
      <b>中</b>
      <svg viewBox="0 0 16 16"><path d="M11 2q4 10-9 9 9 7 12-1 1-4-3-8z"/></svg>
      <svg viewBox="0 0 16 16"><circle cx="5" cy="5" r="2" fill="none" stroke="#1c6cc0" stroke-width="1.300"/><circle cx="11" cy="9" r="2"/><path d="M13 9q0 4-3 5 2-3 1-5z"/></svg>
      <svg viewBox="0 0 16 16"><path d="M0 2.500h16v11H0z"/><path d="M2 5.500h12M2 8h12M5 11h6" stroke="#fff" stroke-width="1.300" stroke-dasharray="1.500 1"/></svg>
      <svg viewBox="0 0 16 16"><circle cx="7" cy="4" r="3"/><path d="M1 13q0-5 6-5 4 0 5 2v4H1z"/><path d="M9 9h6v5H9z" fill="#fff" stroke="#1c6cc0"/></svg>
      <svg viewBox="0 0 16 16"><path d="M5 1h6l5 3-2 4-2-1v8H4V7L2 8 0 4z"/></svg>
      <svg viewBox="0 0 16 16"><path d="M2 14L9 7" stroke="#1c6cc0" stroke-width="3"/><path d="M8 8q0-7 6-6l-3 3 1 2 3-2q0 5-6 4z"/></svg>
    </div>
  </div>
</div>

<!-- Operation dialog -->
<div class="dialog">
  <div class="dlg-head">
    <svg viewBox="0 0 16 16"><circle cx="8" cy="8" r="5" fill="none" stroke="#fff" stroke-width="2"/><circle cx="8" cy="8" r="1.500" fill="#fff"/><path d="M8 0v3M8 13v3M0 8h3M13 8h3M2.500 2.500l2 2M11.500 11.500l2 2M13.500 2.500l-2 2M4.500 11.500l-2 2" stroke="#fff" stroke-width="1.600"/></svg>
    <span>型腔铣 - [CAVITY_MILL_COPY_3_COPY_2]</span>
    <svg class="x" viewBox="0 0 12 12"><path d="M1 1l10 10M11 1L1 11" stroke="#fff" stroke-width="2"/></svg>
  </div>
  <div class="dlg-body">
    <div class="f"><label>刀具</label><span class="combo big">EMC-20F (RL)</span><b class="btn"><svg><use href="#dtool"/></svg></b><b class="btn"><svg><use href="#torch"/></svg><svg class="over"><use href="#wrench"/></svg></b></div>
    <div class="f"><label>方法</label><span class="combo big">高速粗铣</span><b class="btn"><svg><use href="#dmeth"/></svg></b><b class="btn"><svg><use href="#wrench"/></svg></b></div>
    <div class="f"><label>几何体</label><span class="combo big">2</span><b class="btn"><svg><use href="#dgeom"/></svg></b><b class="btn"><svg><use href="#wrench"/></svg></b></div>
    <div class="f low"><label>指定部件</label><b class="btn off"><svg><use href="#dpart"/></svg></b><b class="btn"><svg><use href="#torch"/></svg></b></div>
    <div class="f low"><label>指定毛坯</label><b class="btn"><svg><use href="#dblank"/></svg></b><b class="btn"><svg><use href="#torch"/></svg></b></div>
    <div class="f low"><label>指定检查</label><b class="btn"><svg><use href="#dcheck"/></svg></b><b class="btn off"><svg class="grayed"><use href="#torch"/></svg></b></div>
    <div class="f low"><label>指定切削区域</label><b class="btn"><svg><use href="#darea"/></svg></b><b class="btn off"><svg class="grayed"><use href="#torch"/></svg></b></div>
    <div class="f low"><label>指定修剪边界</label><b class="btn"><svg><use href="#dtrim"/></svg></b><b class="btn"><svg><use href="#torch"/></svg></b></div>
    <div class="f t28"><label>切削模式</label><span class="combo mid"><svg><use href="#follow"/></svg>跟随周边</span></div>
    <div class="f t27"><label>步距</label><span class="combo mid">恒定</span></div>
    <div class="f t27"><label>最大距离</label><span class="num"><mark>15.00000</mark></span><span class="combo unit">mm</span></div>
    <div class="f t27"><label>公共每刀切削深度</label><span class="combo mid">恒定</span></div>
    <div class="f t27"><label>最大距离</label><span class="num">0.30000</span><span class="combo unit">mm</span></div>
    <div class="f mid"><label>切削层</label><b class="btn"><svg><use href="#dlayer"/></svg></b></div>
    <div class="f mid"><label>切削参数</label><b class="btn"><svg><use href="#dcut"/></svg></b></div>
    <div class="f mid"><label>非切削移动</label><b class="btn"><svg><use href="#dnon"/></svg></b></div>
    <div class="f mid"><label>进给率和速度</label><b class="btn"><svg><use href="#dfeed"/></svg></b></div>
    <div class="groups">
      <div class="group">机床控制<svg viewBox="0 0 12 10"><path d="M1 1l5 7 5-7"/></svg></div>
      <div class="group">选项<svg viewBox="0 0 12 10"><path d="M1 1l5 7 5-7"/></svg></div>
    </div>
    <div class="acts"><b class="btn"><svg><use href="#mill"/></svg></b><b class="btn"><svg><use href="#dplay"/></svg></b><b class="btn"><svg><use href="#verify"/></svg></b><b class="btn"><svg><use href="#dlist"/></svg></b></div>
    <div class="ends"><button class="ok">确定</button><button>取消</button></div>
  </div>
</div>

<!-- Pen marks drawn over the dialog -->
<div class="spot"></div>
<svg class="ink" viewBox="0 0 1050 1260">
  <g fill="none" stroke="#ee1c0c" stroke-width="13" stroke-linecap="round" stroke-linejoin="round">
    <path d="M449 184Q455 205 485 235M622 152Q650 146 680 146 705 146 718 156 735 170 742 195 755 215 752 245 745 268 715 275 670 280 640 288 580 292 548 320 530 345 528 380 518 410 525 430L546 463M715 275Q780 290 835 346L830 362Q870 380 890 430 912 460 914 528M278 395Q350 425 425 458 470 462 530 488 580 505 700 512 730 518 755 525L890 530 914 526"/>
    <circle cx="562" cy="209" r="18" stroke-width="8"/>
  </g>
  <path d="M485 237Q500 250 540 262 590 272 640 276M560 186Q565 165 600 153 612 149 622 152" fill="none" stroke="#f828d8" stroke-width="12" stroke-linecap="round"/>
  <path d="M566 211l22 2 52 56q2 12-14 18L574 232z" fill="#fff" stroke="#000" stroke-width="4"/><path d="M566 211l22 2-12 18z"/>
</svg>

<!-- Annotation palette -->
<div class="pen">
  <div class="pen-title">电子教鞭<i></i></div>
  <div class="pen-body">
    <div class="pen-grid">
      <svg viewBox="0 0 20 20"><path d="M3 13l8-9h6l-7 9zM3 13v4h6l1-4M10 17l7-9V4" fill="#fff" stroke="#111" stroke-width="1.300"/></svg>
      <svg viewBox="0 0 20 20"><path d="M4 17L13 7" stroke="#c82020" stroke-width="3"/><path d="M10 5l5 5M13 7l4-5" stroke="#111" stroke-width="3.500"/><path d="M2 18h8" stroke="#c02020" stroke-width="2"/></svg>
      <svg viewBox="0 0 20 20"><path d="M5 8l7-4 6 7-8 7z" fill="#e02818" stroke="#111" stroke-width="1.500"/><path d="M2 14q0-8 8-6M8 2l4 8" fill="none" stroke="#c01010" stroke-width="2"/></svg>
      <svg class="on" viewBox="0 0 20 20"><path d="M1 5h6M6 6l3.500-1 8 8-3 4-2 0z" fill="#fff" stroke="#111" stroke-width="1.300"/><path d="M6 6l3.500-1 1 2-2 2z"/></svg>
      <svg viewBox="0 0 20 20"><path d="M4 4l12 13" stroke="#d02020"/></svg>
      <svg viewBox="0 0 20 20"><path d="M16 17L4 5M4 11V5h6" fill="none" stroke="#d02020" stroke-width="1.200"/></svg>
      <svg viewBox="0 0 20 20"><path d="M2 4.500h16v11H2z" fill="none" stroke="#d02020"/></svg>
      <svg viewBox="0 0 20 20"><ellipse cx="10" cy="10" rx="8" ry="5.500" fill="none" stroke="#d02020"/></svg>
      <svg viewBox="0 0 20 20"><path d="M2 4h16v12H2z" fill="#ff1800"/></svg>
      <svg viewBox="0 0 20 20"><ellipse cx="10" cy="10" rx="8.500" ry="6" fill="#ff1800"/></svg>
      <svg viewBox="0 0 20 20"><path d="M6 16V7l2-2h4l2 2v9M6 11h8" fill="none" stroke="#d82018" stroke-width="2.600"/></svg>
      <svg viewBox="0 0 20 20"><path d="M3 14V7h4v7M3 11h4M11 15V5h5v10M11 11h5" fill="none" stroke="#999" stroke-width="1.500"/></svg>
      <svg viewBox="0 0 20 20"><path d="M2 3h16v8H2z"/><path d="M2 11h16v6H2z" fill="#fff"/></svg>
      <svg viewBox="0 0 20 20"><path d="M2 3h16v12H2z" fill="#28c0d8" stroke="#111" stroke-width="1.500"/><path d="M7 17h7M6 6h7M7 12l6-6M8 7l5 5" stroke="#a02020" stroke-width="1.300"/></svg>
      <svg viewBox="0 0 20 20"><path d="M11 11l6 6" stroke="#111" stroke-width="2.500"/><circle cx="8" cy="8" r="5" fill="#28e0f8" stroke="#157"/></svg>
      <svg viewBox="0 0 20 20"><path d="M3 3h14v14H3z" fill="#222"/><path d="M6 4h8v6H6zM7 13h6v4H7z" fill="#f0f0d8"/></svg>
      <svg viewBox="0 0 20 20"><path d="M2 16V6h5l1 2h6v3M2 16l4-6h12l-4 6zM11 4q4-3 5 2" fill="#e8d868" stroke="#111" stroke-width="1.300"/></svg>
      <svg viewBox="0 0 20 20"><path d="M10 3l5 7-5 7-5-7z" fill="none" stroke="#d83028"/></svg>
    </div>
    <div class="pen-sel"><span>4<i></i></span><span><em></em><i></i></span></div>
    <div class="pen-brand">红烛软件</div>
  </div>
</div>

<div class="status">指定参数<svg viewBox="0 0 16 16"><path d="M1 4V1h3M12 1h3v3M15 12v3h-3M4 15H1v-3" fill="none" stroke="#888"/><path d="M3.500 3.500h9v9h-9z" fill="#88a8d8" stroke="#445"/><path d="M4 5h8" stroke="#fff"/></svg></div>

<div class="taskbar">
  <svg class="tk" viewBox="0 0 24 24"><path d="M3 5l8-1v8H3zM12 4l11-2v10H12zM3 13h8v7l-8-1zM12 13h11v9l-11-2z" fill="#fff"/></svg>
  <svg class="tk" viewBox="0 0 24 24"><circle cx="14" cy="9" r="5.500" fill="none" stroke="#fff" stroke-width="1.300"/><path d="M10 13l-6 7" stroke="#fff" stroke-width="1.500"/></svg>
  <svg class="tk" viewBox="0 0 24 24"><path d="M7 4h10v15H7zM5 6H3v11h2M19 6h2v11h-2" fill="none" stroke="#fff" stroke-width="1.200"/></svg>
  <svg class="tk" viewBox="0 0 24 24"><circle cx="12" cy="12" r="10.500" fill="#6cc038"/><path d="M6 13h12q0-7-6-7t-6 6 6 6q4 0 6-2" fill="none" stroke="#fff" stroke-width="2.600"/><path d="M3 22Q1 12 12 1" fill="none" stroke="#2c8018" stroke-width="2"/></svg>
  <div class="task pencil"><svg viewBox="0 0 24 24"><path d="M1 1l11 13" stroke="#0818b0" stroke-width="3"/><path d="M9 9l8 3 3 6-4 2-6-4z" fill="#f8c048"/><path d="M16 22l7-5" stroke="#0828a0" stroke-width="4"/></svg><svg class="ghost g1"><use href="#puppet"/></svg><svg class="ghost g2"><use href="#umb"/></svg></div>
  <svg class="tk p1"><use href="#puppet"/></svg>
  <svg class="tk p2"><use href="#umb"/></svg>
  <svg class="tk p3" viewBox="0 0 24 24"><path d="M1 1h22v22H1z" fill="#b8d8ec"/><path d="M4 14V5h5l3 4 3-4h5v9" fill="none" stroke="#38b020" stroke-width="3"/><path d="M7 20l5-5 5 5z" fill="#fff" stroke="#4890c0"/></svg>
  <div class="faded">产品零件图<svg viewBox="0 0 24 24"><path d="M4 2l17-1v4L4 7z" fill="#eee"/><path d="M6 2l2 3M11 2l2 3M16 2l2 3" stroke="#111" stroke-width="2"/><path d="M4 8l17-2v15L3 23z" fill="#2878d8"/><path d="M18 9L8 13l9 2-10 5" stroke="#b8dcff" fill="none" stroke-width="2"/></svg><svg class="q"><use href="#qq"/></svg></div>
  <div class="task dark"><svg viewBox="0 0 24 24"><path d="M6 2h9v20H6z" fill="#f8dc80"/><path d="M12 2h4v14l3 2v4h-7z" fill="#e8bc50"/></svg>产品零件图</div>
  <div class="task dark wps"><svg viewBox="0 0 24 24"><path d="M12 0l10 5v13l-10 6L1 18V5z" fill="#1868e0"/><path d="M5 8l3 8 4-7 4 7 2-8" fill="none" stroke="#fff" stroke-width="1.800"/><path d="M13 13h10v11H13z" fill="#f88040"/><path d="M16 22v-7h4v3h-4" fill="none" stroke="#fff"/></svg>点冠教育片头.pptx...</div>
  <div class="task nx"><svg viewBox="0 0 24 24"><circle cx="12" cy="13" r="9.500" fill="#2890d8"/><path d="M14 5q8 3 5 13" stroke="#a8e8c8" stroke-width="3" fill="none"/><path d="M3 1h11l-4 10z" fill="#c01828"/><path d="M2 22q20 2 21-17" fill="none" stroke="#e8b030" stroke-width="2.400"/></svg>NX 10 - 加工 - [0...</div>
  <span class="qun">UG编程学习Q群192963572</span>
  <div class="tray">
    <svg viewBox="0 0 16 16"><path d="M3 1h10v14H3z" fill="#fff"/><path d="M4 1v14M12 1v14" stroke="#111" stroke-dasharray="2 1"/><path d="M3 8h10" stroke="#111"/></svg>
    <svg viewBox="0 0 16 16"><circle cx="8" cy="8" r="8" fill="#2858b8"/><path d="M4 12V5l3 5V5M8 10l4-5M9 6l3 4" stroke="#fff" fill="none" stroke-width="1.500"/></svg>
    <svg viewBox="0 0 16 16"><path d="M0 2h16v12H0z" fill="#2c3a2c"/><path d="M1 8q5-6 10 0-5 5-10 0z" fill="#4c7818" stroke="#78b820" stroke-width="1.500"/><path d="M14 3v7M14 12v2" stroke="#f0c820" stroke-width="2"/></svg>
    <svg><use href="#qq"/></svg>
    <svg><use href="#qq"/></svg>
    <svg viewBox="0 0 16 16"><path d="M4 3h12v8H4M1 1v5h4V2M3 6v8h10M9 11v3" fill="none" stroke="#fff" stroke-width="1.200"/></svg>
    <svg viewBox="0 0 16 16"><path d="M0 6h3l4-4v12l-4-4H0zM9 5q2 3 0 6M11 3q4 5 0 10M13 1q6 7 0 14" fill="none" stroke="#fff" stroke-width="1.100"/></svg>
    <span>中</span>
  </div>
  <div class="clock">16:42<br>2019/5/15</div>
</div>

<script src="script.js"></script>
</body>
</html>
```
FILE: script.js
```js
// "|" separator, "v" dropdown arrow, anything else is an icon id
const tools = "v doc open camera newprog newtool newgeom newmeth newop verify vgray toolpath filt filt tree tree csys csys2 v copy list grid stair tri v plus v extr v cubeg v | cyl cubew [100] layers laym laydoc dia dia2 dia4 diac dia3 diab info ruler angle sectrg sect sectnew save | undo v | verify v | bear [find] v";

document.getElementById("mainTools").innerHTML = tools.split(" ").map(t => {
  if (t === "v") return `<i class="dd"></i>`;
  if (t === "|") return `<i class="sep"></i>`;
  if (t === "[100]") return `<span class="combo w-layer">100</span>`;
  if (t === "[find]") return `<span class="find">查找命令<svg><use href="#mag"/></svg></span>`;
  return `<svg class="ic"><use href="#${t}"/></svg>`;
}).join("") + `<i class="edge"></i>`;

let res = "";
for (let i = 1; i <= 14; i++) {
  res += `<div class="tab${i === 1 ? " on" : ""}"><svg><use href="#r${i}"/></svg></div>`;
}
document.getElementById("resbar").innerHTML = res;

// level, icon, name, tool change, tool, number, time
const rows = [
  [0, "", "NC_PROGRAM", "", "", "", "03:21:57"],
  [0, "folder", "未用项", "", "", "", "00:00:00"],
  [1, "folder", "2", "", "", "", "01:24:13"],
  [2, "cavity", "CAVITY_MIL...", "m", "EMC-20F", "1", "00:32:03"],
  [2, "cavity", "CAVITY_MIL...", "", "EMC-20F", "1", "00:18:41"],
  [2, "zlevel", "ZLEVEL_PRO...", "m", "EMC-10A", "15", "00:01:03"],
  [2, "planar", "PLANAR_MI...", "", "EMC-10A", "15", "00:04:08"],
  [2, "folder", "419.NC", "", "", "", "00:27:54"],
  [3, "planar", "PLANAR_...", "", "EMC-10A", "15", "00:04:26"],
  [3, "zlevel", "ZLEVEL_P...", "m", "EMC-6A", "12", "00:00:56"],
  [3, "planar", "PLANAR_...", "", "EMC-6A", "12", "00:03:50"],
  [3, "drill", "DRILLIN...", "d", "CTR-3-8", "13", "00:00:08"],
  [3, "drill", "PECK_DR...", "d", "DR-5", "4", "00:00:44"],
  [3, "drill", "PECK_DR...", "d", "DR-6", "3", "00:00:22"],
  [3, "planar", "PLANAR_...", "m", "EMC-4A", "8", "00:01:15"],
  [3, "planar", "PLANAR_...", "", "EMC-4A", "8", "00:02:31"],
  [3, "drill", "DRILLIN...", "m", "CMF-12X90", "10", "00:00:05"],
  [3, "drill", "DRILLIN...", "", "CMF-12X90", "10", "00:00:01"],
  [3, "planar", "PLANAR_...", "", "CMF-12X90", "10", "00:00:45"],
  [3, "planar", "PLANAR_...", "", "CMF-12X90", "10", "00:00:23"],
  [3, "planar", "PLANAR_...", "", "CMF-12X90", "10", "00:00:10"],
  [3, "cavity", "CAVITY_...", "m", "EMC-16F", "6", "00:02:14"],
  [3, "cavity", "CAVITY_...", "", "EMC-16F", "6", "00:00:17"],
  [3, "planar", "PLANAR_...", "m", "EMC-12E", "9", "00:00:16"],
  [3, "planar", "PLANAR_...", "", "EMC-12E", "9", "00:00:49"],
  [3, "planar", "PLANAR_...", "", "EMC-12E", "9", "00:00:43"],
  [3, "planar", "PLANAR_...", "", "EMC-12E", "9", "00:00:27"],
  [3, "planar", "PLANAR_...", "", "EMC-12E", "9", "00:00:43"],
  [3, "planar", "PLANAR_...", "m", "EMC-6E", "16", "00:00:07"],
  [3, "planar", "PLANAR_...", "", "EMC-6E", "16", "00:02:00"],
  [3, "zlevel", "ZLEVEL_P...", "m", "BMC-R5", "2", "00:01:05"],
  [3, "planar", "PLANAR_...", "m", "EMC-4E", "7", "00:00:28"],
  [3, "planar", "PLANAR_...", "", "EMC-4E", "7", "00:00:58"],
  [1, "folder", "PROGRAM", "", "", "", "01:55:31"],
  [1, "cavity", "CAVITY_MILL_C...", "m", "EMC-10A", "15", "00:02:01"],
  null, null, null, null
];

document.getElementById("rows").innerHTML = rows.map((r, i) => {
  if (!r) return `<div class="row"><span class="name"></span><span></span><span></span><span></span><span></span><span></span></div>`;
  const [lv, icon, name, swap, tool, num, time] = r;
  const cls = ["row", "lv" + lv];
  if (i === 4) cls.push("sel");
  else if (swap) cls.push("change");
  const state = name === "PROGRAM" ? "warn" : "ok";
  let box = "";
  if (name === "419.NC") box = `<i class="box">−</i>`;
  if (name === "PROGRAM") box = `<i class="box">+</i>`;
  return `<div class="${cls.join(" ")}">
    <span class="name">${box}${icon ? `<svg class="st"><use href="#${state}"/></svg><svg class="op"><use href="#${icon}"/></svg>` : ""}<b>${name}</b></span>
    <span class="c">${swap ? `<svg class="sw"><use href="#swap${swap}"/></svg>` : ""}</span>
    <span class="c k">${tool ? `<svg class="st"><use href="#ok"/></svg>` : ""}</span>
    <span>${tool}</span><span>${num}</span><span>${time}</span></div>`;
}).join("");
```
FILE: styles.css
```css
* {
  box-sizing: border-box;
}
body {
  margin: 0;
  width: 1920px;
  height: 1080px;
  overflow: hidden;
  position: relative;
  background: #fff;
  color: #222;
  font: 12px/16px "Noto Sans", "Noto Sans CJK SC", sans-serif;
  white-space: nowrap;
}
.defs {
  position: absolute;
}
i, em {
  font-style: normal;
}

/* title and menu */
.titlebar {
  height: 26px;
  display: flex;
  align-items: center;
  padding-left: 3px;
}
.nx-logo {
  width: 39px;
  height: 20px;
  font: bold 22px/20px "Open Sans", sans-serif;
  color: #8496a6;
  border-right: 1px solid #ccc;
}
.title-text {
  margin: -1px 0 0 4px;
  width: 280px;
  font-size: 13px;
  letter-spacing: 0.1px;
}
.siemens {
  margin-left: auto;
  font: bold 12.5px "Open Sans", sans-serif;
  letter-spacing: 0.6px;
  color: #0a8c96;
  width: 62px;
}
.win-btns {
  width: 60px;
  height: 16px;
  margin: 0 7px 0 26px;
}
.menubar {
  height: 27px;
  background: #c7d6d6;
  display: flex;
  align-items: center;
  padding-bottom: 2px;
}
.menu-ic {
  width: 17px;
  height: 17px;
  margin: 0 5px 0 8px;
}
.menus {
  display: grid;
  grid-template-columns: 22px 36px 41px 22px 37px 36px 37px 36px 38px 33px 43px 48px 33px 38px 34px;
  column-gap: 13px;
  font-size: 11.5px;
  letter-spacing: -0.2px;
}
.mdi-btns {
  width: 50px;
  height: 16px;
  margin: 0 6px 0 auto;
}

/* toolbars */
.toolbar {
  display: flex;
  align-items: center;
}
.main-tools {
  height: 34px;
  padding-left: 92px;
  border-bottom: 1px solid #ddd;
  width: 1842px;
}
.sel-tools {
  height: 31px;
  width: 1920px;
}
.ic {
  width: 31px;
  height: 23px;
  flex: none;
}
.ic.s {
  width: 23px;
  height: 17px;
}
.dd {
  width: 12px;
  flex: none;
  display: flex;
  justify-content: center;
}
.dd::after, .combo::after, .pen-sel i::after {
  content: "";
  border: 4px solid transparent;
  border-top: 4px solid #222;
  border-bottom: 0;
}
.combo::after {
  margin-left: auto;
}
.dd::after {
  border-width: 3px;
  border-top-width: 4px;
}
.dd.last {
  margin: 10px 4px 0 auto;
}
.sep {
  width: 4px;
  height: 26px;
  flex: none;
  background: linear-gradient(#ddd, #ddd) 1px 0 / 1px 100% no-repeat;
}
.main-tools .sep ~ .combo {
  margin: 0 4px 0 4px;
}
.edge {
  margin-left: auto;
  width: 1px;
  height: 34px;
  background: #ddd;
}
.combo {
  border: 1px solid #999;
  background: #fff;
  height: 20px;
  flex: none;
  display: flex;
  align-items: center;
  padding: 0 5px 0 4px;
}
.combo.dim {
  color: #999;
  border-color: #bbb;
}
.combo.dim::after {
  border-top-color: #999;
}
.w-hid { width: 60px; margin-left: 78px; }
.w-asm { width: 140px; margin: 0 4px 0 7px; padding-left: 2px; }
.w-asm + .ic + .sep { margin-left: 1px; }
.w-all { width: 56px; margin: 0 4px 0 3px; padding-left: 3px; }
.w-layer { width: 49px; }
.find {
  width: 125px;
  height: 20px;
  margin: 0 4px 0 9px;
  border: 1px solid #999;
  display: flex;
  align-items: center;
  justify-content: space-between;
  padding: 0 2px 0 1px;
  font-size: 11px;
}
.find svg {
  width: 16px;
  height: 16px;
}
.find + .dd {
  margin-top: 10px;
}

/* work area */
.work {
  height: 900px;
  display: flex;
  border-top: 1px solid #888;
}
.resbar {
  width: 33px;
  padding-top: 170px;
  background: #d9d9d9;
  border-left: 3px solid #eee;
  border-right: 1px solid #a8a8a8;
}
.tab {
  height: 42px;
  display: flex;
  align-items: center;
  justify-content: center;
}
.tab svg {
  width: 23px;
  height: 23px;
}
.tab.on {
  background: #fff;
  height: 41px;
  margin: 0 -1px -1px 0;
}
.tab:nth-child(5), .tab:nth-child(6), .tab:nth-child(7) {
  margin-top: 12px;
}
.navigator {
  width: 464px;
  padding: 0 10px 0 5px;
}
.nav-title {
  height: 28px;
  padding-left: 4px;
  display: flex;
  align-items: center;
  justify-content: space-between;
}
.nav-title span {
  margin: 2px 0 0 -1px;
  width: 122px;
  display: flex;
  justify-content: flex-end;
}
.max {
  width: 12px;
  height: 11px;
  border: 1px solid #222;
  margin: 3px 6px 0 0;
}
.tree {
  height: 811px;
  border: 1px solid #ccc;
  border-width: 1px 1px 0;
}
.row {
  display: grid;
  grid-template-columns: 159px 43px 45px 83px 51px 66px;
  height: 20px;
  font-size: 12.8px;
  line-height: 19px;
  letter-spacing: -0.4px;
  border-bottom: 1px solid #e6e6e6;
}
.row > span {
  border-right: 1px solid #e2e2e2;
  padding-left: 4px;
  overflow: hidden;
  height: 20px;
}
.row > span:last-child {
  border-right: 0;
}
.row:nth-child(even) {
  background: #f9f9f9;
}
.row.head {
  height: 22px;
  line-height: 22px;
  background: #f0f0f0;
  font-size: 12px;
  letter-spacing: 0;
}
.row.head > span {
  padding-left: 6px;
  border-color: #ccc;
}
.rows {
  height: 771px;
  overflow: hidden;
}
.row > .name {
  border-right: 1px solid #000;
  display: flex;
  align-items: center;
  padding: 0;
  position: relative;
}
.name b {
  font-weight: normal;
  padding-left: 3px;
}
.name .st {
  height: 15px;
  margin-right: 3px;
}
.st {
  width: 12px;
  height: 12px;
  flex: none;
}
.op {
  width: 15px;
  height: 15px;
  flex: none;
}
.sw {
  width: 8px;
  height: 14px;
  margin: 3px 0 0 5px;
}
.row > .c.k {
  padding: 4px 0 0 6px;
}
.c.k .st {
  display: block;
}
.row.lv0 > .name { padding-left: 6px; }
.row.lv1 > .name { padding-left: 22px; }
.row.lv2 > .name { padding-left: 41px; }
.row.lv3 > .name { padding-left: 60px; }
.row.lv0:first-child > .name {
  padding-left: 7px;
}
.change {
  color: #7048b8;
}
.row.sel {
  color: #fff;
  background: linear-gradient(#3296fa, #3296fa) 71px 0 / 400px 100% no-repeat;
}
.box {
  position: absolute;
  left: 25px;
  top: 5px;
  width: 9px;
  height: 9px;
  border: 1px solid #bbb;
  background: #fff;
  font-size: 10px;
  line-height: 7px;
  letter-spacing: 0;
  text-align: center;
  color: #000;
}
.lv1 .box {
  left: 6px;
}
/* dotted connectors of the tree */
.lv2 .name::before, .lv3 .name::before {
  content: "";
  position: absolute;
  left: 10px;
  top: 0;
  height: 20px;
  border-left: 1px dotted #999;
}
.lv3 .name::after {
  content: "";
  position: absolute;
  left: 48px;
  top: -10px;
  width: 9px;
  height: 20px;
  border-left: 1px dotted #999;
  border-bottom: 1px dotted #999;
}
.lv1:nth-child(35) .name::after {
  content: "";
  position: absolute;
  left: 10px;
  top: -10px;
  width: 9px;
  height: 20px;
  border-left: 1px dotted #999;
  border-bottom: 1px dotted #999;
}
.hscroll {
  height: 15px;
  background: #f0f0f0;
  display: flex;
  align-items: center;
  padding: 0 5px;
}
.hscroll svg {
  width: 8px;
  height: 10px;
}
.hscroll path {
  fill: none;
  stroke: #444;
  stroke-width: 2;
}
.hscroll i {
  width: 243px;
  height: 15px;
  margin-left: 5px;
  background: #cdcdcd;
}
.hscroll .r {
  margin-left: auto;
}
.split {
  height: 5px;
  margin-top: 1px;
  background: #ddd;
  border: 1px solid #aaa;
}
.fold, .group {
  display: flex;
  align-items: center;
  justify-content: space-between;
  font-size: 14px;
  color: #3c8cb4;
}
.fold {
  height: 24px;
  padding: 3px 6px 0 7px;
  border-bottom: 2px solid #ccc;
}
.fold svg, .group svg {
  width: 11px;
  height: 9px;
  margin-bottom: 3px;
  fill: none;
  stroke: #3c8cb4;
  stroke-width: 2;
}

/* graphics window */
.viewport {
  flex: 1;
  position: relative;
  overflow: hidden;
  background: linear-gradient(#242650 0, #1b3e6b 251px, #0c5287 511px, #046499 760px, #046499 100%);
}
.part {
  position: absolute;
  left: 393px;
  top: 251px;
  width: 720px;
  height: 520px;
}
.axis {
  position: absolute;
  font: 13px/14px "Liberation Sans", sans-serif;
  letter-spacing: -0.5px;
}
.zm { left: 785px; top: 267px; color: #0838ff; }
.xm { left: 700px; top: 323px; color: #f04840; }
.ym { left: 767px; top: 420px; color: #30a840; }
.triad {
  position: absolute;
  left: 43px;
  top: 806px;
  width: 90px;
  height: 80px;
  font-family: "Liberation Sans", sans-serif;
}
.ime {
  position: absolute;
  right: 0;
  top: 859px;
  width: 172px;
  height: 24px;
  padding: 0 3px 0 20px;
  background: #fcfeff;
  display: flex;
  align-items: center;
  justify-content: space-between;
  color: #1c6cc0;
  font-size: 15px;
}
.ime svg {
  width: 16px;
  height: 16px;
  fill: #1c6cc0;
}
.ime .sogou {
  position: absolute;
  left: -14px;
  top: -3px;
  width: 29px;
  height: 28px;
}

/* dialog */
.dialog {
  position: absolute;
  left: 549px;
  top: 225px;
  width: 328px;
  height: 710px;
  background: #e7e7e7;
  border: 1px solid #6c9c9c;
}
.dlg-head {
  height: 23px;
  background: #588584;
  color: #fff;
  display: flex;
  align-items: center;
  padding: 0 9px 0 7px;
  font-size: 14px;
  letter-spacing: -0.1px;
}
.dlg-head svg {
  width: 14px;
  height: 14px;
  margin-right: 9px;
}
.dlg-head .x {
  width: 12px;
  height: 12px;
  margin: 2px 0 0 auto;
}
.dlg-body {
  padding: 8px 9px 0;
}
.f {
  height: 34px;
  display: flex;
  align-items: flex-start;
  gap: 2px;
}
.f label {
  margin-right: auto;
  line-height: 26px;
}
.f.low label {
  line-height: 39px;
}
.f.mid label {
  line-height: 32px;
}
.f.t28 {
  height: 29px;
  padding-top: 1px;
  margin-top: -1px;
}
.f.t27 {
  height: 27px;
}
.f .combo {
  height: 25px;
}
.f .big {
  width: 117px;
}
.f .mid {
  width: 141px;
}
.f .mid svg {
  width: 16px;
  height: 16px;
  margin-right: 4px;
}
.f .unit {
  width: 63px;
}
.num {
  width: 82px;
  height: 23px;
  background: #fff;
  border: 1px solid #aaa;
  padding: 2px 3px;
  font: 14.2px/18px "Liberation Mono", monospace;
  overflow: hidden;
  text-indent: 17px;
}
.num mark {
  display: block;
  background: #0078d7;
  color: #fff;
  text-indent: 11px;
  overflow: hidden;
}
.btn {
  position: relative;
  width: 32px;
  height: 32px;
  border: 1px solid #aaa;
  display: flex;
  align-items: center;
  justify-content: center;
}
.btn.off {
  border-color: #ccc;
}
.btn svg {
  width: 22px;
  height: 22px;
}
.btn .over {
  position: absolute;
}
.grayed {
  filter: grayscale(1);
  opacity: 0.4;
}
.groups {
  margin-top: -2px;
}
.group {
  height: 24px;
  margin-bottom: 3px;
  padding: 2px 6px 0 7px;
  background: #fff;
  border-bottom: 1px solid #ccc;
}
.acts {
  display: flex;
  gap: 2px;
  padding: 2px 0 12px 87px;
}
.ends {
  display: flex;
  justify-content: flex-end;
  gap: 5px;
  padding-right: 6px;
}
button {
  width: 54px;
  height: 25px;
  padding: 0;
  border: 1px solid #aaa;
  background: #ccced2;
  font: 12px "Noto Sans CJK SC", sans-serif;
  color: #222;
}
button.ok {
  background: #98c8e8;
  border-color: #5a9cc8;
}
.spot {
  position: absolute;
  left: 698px;
  top: 560px;
  width: 58px;
  height: 58px;
  border-radius: 50%;
  background: #fff000;
  mix-blend-mode: multiply;
}
.ink {
  position: absolute;
  left: 540px;
  top: 520px;
  width: 350px;
  height: 420px;
}

/* floating pen palette */
.pen {
  position: absolute;
  left: 3px;
  top: 61px;
  width: 86px;
}
.pen-title {
  height: 26px;
  background: #fff;
  color: #888;
  display: flex;
  align-items: flex-start;
  justify-content: space-between;
  padding: 3px 1px 0 3px;
}
.pen-title i {
  width: 19px;
  height: 18px;
  background: #ddd;
}
.pen-body {
  height: 214px;
  background: #f0f0f0;
}
.pen-grid {
  display: grid;
  grid-template-columns: 28px 28px 28px;
  grid-auto-rows: 26px;
}
.pen-grid svg {
  width: 20px;
  height: 20px;
  margin: 4px 0 0 3px;
}
.pen-grid .on {
  background: #fafafa;
  outline: 1px solid #bbb;
  outline-offset: 2px;
}
.pen-sel {
  display: flex;
  gap: 4px;
  padding: 10px 0 0 2px;
}
.pen-sel span {
  width: 38px;
  height: 22px;
  border: 2px inset #aaa;
  background: #fff;
  display: flex;
  justify-content: space-between;
  padding-left: 3px;
  line-height: 18px;
}
.pen-sel i {
  width: 16px;
  background: #eee;
  border: 1px outset #ccc;
  display: flex;
  align-items: center;
  justify-content: center;
}
.pen-sel em {
  width: 15px;
  background: #ff1800;
  border: 1px solid #111;
  margin: 0 0 0 -2px;
}
.pen-brand {
  color: #d02818;
  margin: 7px 0 0 17px;
}

/* status and taskbar */
.status {
  height: 22px;
  border-top: 1px solid #aaa;
  display: flex;
  align-items: center;
  justify-content: space-between;
  padding: 0 55px 2px 3px;
  font-size: 11px;
}
.status svg {
  width: 16px;
  height: 16px;
}
.taskbar {
  height: 40px;
  background: #1e1e1e;
  color: #fff;
  display: flex;
  align-items: center;
  position: relative;
  padding-bottom: 1px;
}
.taskbar svg {
  width: 24px;
  height: 23px;
  flex: none;
}
.tk {
  margin: 0 12px;
}
.tk:nth-child(3) { margin-right: 17px; }
.tk:nth-child(4) { margin-right: 16px; }
.task {
  height: 38px;
  border: 1px solid #888;
  display: flex;
  align-items: center;
  padding: 0 0 2px 7px;
}
.pencil {
  width: 158px;
  background: linear-gradient(90deg, #777, #686868);
  border-color: #ccc;
}
.ghost {
  opacity: 0.08;
}
.g1 { margin-left: 34px; }
.g2 { margin-left: 28px; }
.tk.p1 { margin: 0 15px 0 15px; }
.tk.p2 { margin: 0 15px; }
.tk.p3 { margin: 0 14px; }
.faded {
  width: 108px;
  height: 38px;
  background: #232323;
  color: #484848;
  display: flex;
  align-items: center;
  justify-content: center;
  position: relative;
  padding-left: 24px;
}
.faded svg {
  position: absolute;
  left: 14px;
}
.faded .q {
  left: 67px;
}
.dark {
  width: 158px;
  background: #4a4a4a;
  gap: 5px;
}
.taskbar .dark:nth-child(10) {
  margin-left: -1px;
}
.wps {
  margin-left: 3px;
  padding-left: 9px;
}
.nx {
  width: 158px;
  margin-left: 3px;
  padding-left: 8px;
  gap: 5px;
  background: radial-gradient(circle at 70% 60%, #70b0b4, #387c80);
  border-color: #88c8cc;
}
.qun {
  position: absolute;
  left: 1010px;
  top: 5px;
  font: 500 18px/24px "Noto Sans CJK SC", sans-serif;
  letter-spacing: 0.8px;
  color: #e8e8e8;
}
.tray {
  margin-left: auto;
  display: flex;
  align-items: center;
  gap: 7px;
  font-size: 13px;
}
.tray svg {
  width: 17px;
  height: 16px;
}
.clock {
  width: 62px;
  margin: 0 16px 1px 24px;
  line-height: 19px;
  text-align: center;
}
```
